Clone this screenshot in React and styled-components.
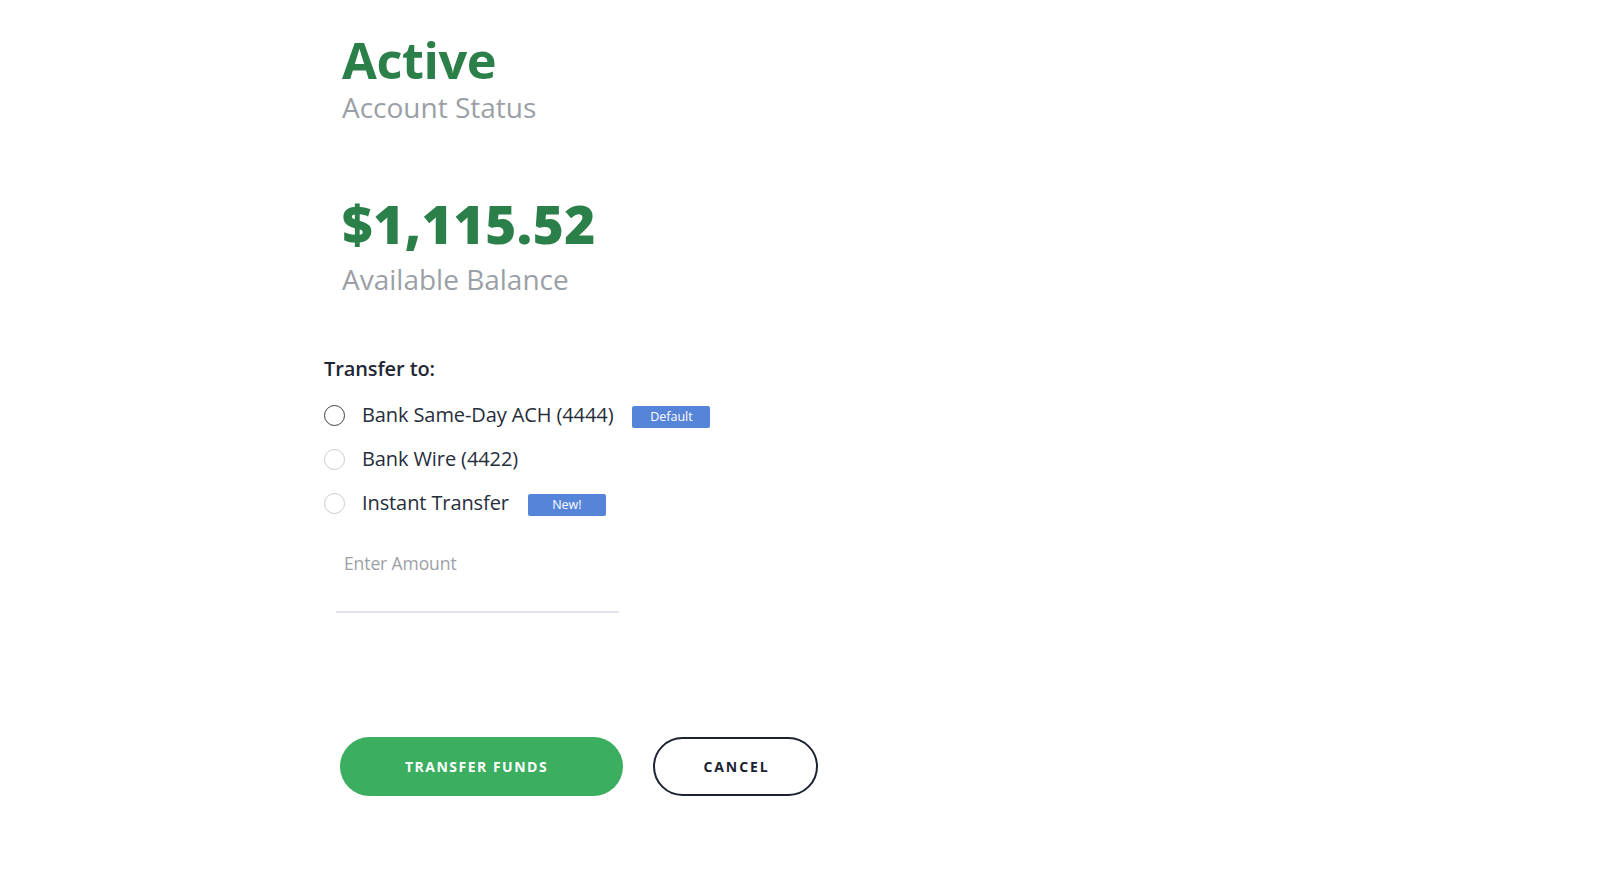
import React from "react";
import styled, { createGlobalStyle } from "styled-components";

const Global = createGlobalStyle`
  html, body { margin: 0; padding: 0; background: #ffffff; }
  body { font-family: "Open Sans", "Noto Sans", sans-serif; -webkit-font-smoothing: antialiased; }
  * { box-sizing: border-box; }
`;

const Page = styled.main`
  display: flex;
  flex-direction: column;
  align-items: flex-start;
  padding: 30px 0 0 324px;
  min-height: 893px;
`;

const Stat = styled.section`
  display: flex;
  flex-direction: column;
  margin-left: 18px;
  margin-top: ${(p) => p.$top || 0}px;
`;

const BigValue = styled.div`
  font-weight: ${(p) => p.$weight || 800};
  color: #2b7f48;
  font-size: ${(p) => p.$size}px;
  line-height: ${(p) => p.$lh}px;
  letter-spacing: ${(p) => p.$ls || 0}px;
`;

const Caption = styled.div`
  color: #9b9fa6;
  font-weight: 400;
  font-size: ${(p) => p.$size}px;
  line-height: 36px;
  margin-top: ${(p) => p.$top || 0}px;
`;

const SectionTitle = styled.h3`
  margin: 58px 0 0;
  font-size: 20px;
  line-height: 28px;
  font-weight: 600;
  color: #1f2736;
  letter-spacing: -0.1px;
`;

const Options = styled.div`
  display: flex;
  flex-direction: column;
  gap: 14px;
  margin-top: 17px;
`;

const Option = styled.label`
  display: flex;
  align-items: center;
  height: 30px;
  cursor: pointer;
`;

const Radio = styled.span`
  width: 21px;
  height: 21px;
  border-radius: 50%;
  border: 1.6px solid ${(p) => (p.$dark ? "#3b4049" : "#c9cbcf")};
  flex: none;
  margin-right: 17px;
`;

const OptionText = styled.span`
  font-size: 20px;
  line-height: 28px;
  color: #272e3b;
  letter-spacing: -0.1px;
`;

const Badge = styled.span`
  display: inline-flex;
  align-items: center;
  justify-content: center;
  width: 78px;
  height: 22px;
  margin-left: ${(p) => p.$gap}px;
  margin-top: 3px;
  background: #5584d9;
  color: #ffffff;
  border-radius: 2px;
  font-size: 12.5px;
  font-weight: 500;
`;

const AmountInput = styled.input`
  margin: 21px 0 0 12px;
  width: 283px;
  padding: 12px 8px 36px;
  border: none;
  border-bottom: 2px solid #e2e4ea;
  font-family: "Open Sans", "Noto Sans", sans-serif;
  font-size: 17.5px;
  line-height: 24px;
  color: #272e3b;
  outline: none;
  background: transparent;
  &::placeholder { color: #9b9fa6; letter-spacing: -0.1px; }
`;

const Actions = styled.div`
  display: flex;
  gap: 30px;
  margin: 124px 0 0 16px;
`;

const Button = styled.button`
  height: 59px;
  width: ${(p) => p.$w}px;
  border-radius: 30px;
  font-family: "Open Sans", "Noto Sans", sans-serif;
  font-weight: 700;
  font-size: 14px;
  letter-spacing: ${(p) => (p.$primary ? 1.5 : 1.9)}px;
  text-transform: uppercase;
  cursor: pointer;
  background: ${(p) => (p.$primary ? "#3bae60" : "#ffffff")};
  color: ${(p) => (p.$primary ? "#ffffff" : "#1c2230")};
  border: ${(p) => (p.$primary ? "none" : "2px solid #1c2230")};
  padding: ${(p) => (p.$primary ? "0 10px 0 0" : "0 0 0 2px")};
`;

const options = [
  { label: "Bank Same-Day ACH (4444)", badge: "Default", dark: true },
  { label: "Bank Wire (4422)" },
  { label: "Instant Transfer", badge: "New!" },
];

export default function App() {
  return (
    <>
      <Global />
      <Page>
        <Stat>
          <BigValue $weight={700} $size={50.5} $lh={59} $ls={-0.4}>Active</BigValue>
          <Caption $size={28}>Account Status</Caption>
        </Stat>
        <Stat $top={68}>
          <BigValue $size={53} $lh={62} $ls={0.6}>$1,115.52</BigValue>
          <Caption $size={28} $top={6}>Available Balance</Caption>
        </Stat>
        <SectionTitle>Transfer to:</SectionTitle>
        <Options>
          {options.map((o) => (
            <Option key={o.label}>
              <Radio $dark={o.dark} />
              <OptionText>{o.label}</OptionText>
              {o.badge && <Badge $gap={19}>{o.badge}</Badge>}
            </Option>
          ))}
        </Options>
        <AmountInput placeholder="Enter Amount" />
        <Actions>
          <Button $primary $w={283}>Transfer Funds</Button>
          <Button $w={165}>Cancel</Button>
        </Actions>
      </Page>
    </>
  );
}
